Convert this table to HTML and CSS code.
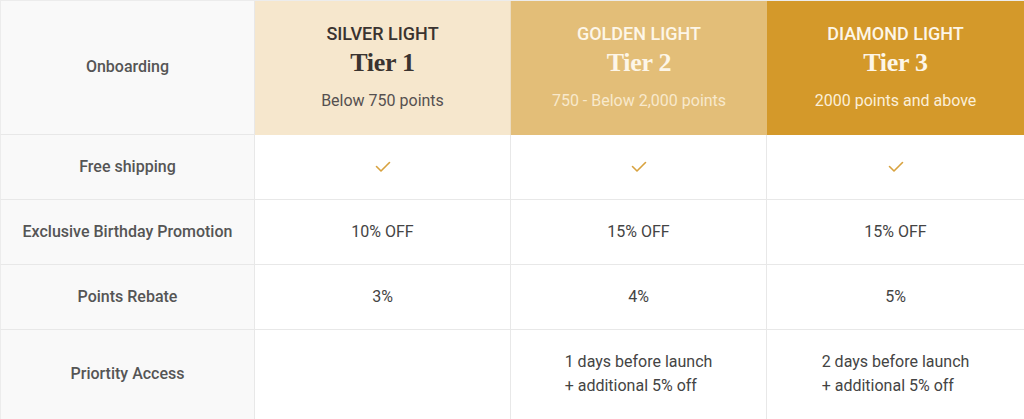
FILE: index.html
```html
<!DOCTYPE html>
<html>
<head>
<meta charset="utf-8">
<link rel="stylesheet" href="styles.css">
</head>
<body>
<div class="table">
  <div class="cell label head-label">Onboarding</div>
  <div class="cell tier tier1">
    <div class="tier-name">SILVER LIGHT</div>
    <div class="tier-title">Tier 1</div>
    <div class="tier-range">Below 750 points</div>
  </div>
  <div class="cell tier tier2">
    <div class="tier-name">GOLDEN LIGHT</div>
    <div class="tier-title">Tier 2</div>
    <div class="tier-range">750 - Below 2,000 points</div>
  </div>
  <div class="cell tier tier3">
    <div class="tier-name">DIAMOND LIGHT</div>
    <div class="tier-title">Tier 3</div>
    <div class="tier-range">2000 points and above</div>
  </div>

  <div class="cell label">Free shipping</div>
  <div class="cell value"><svg class="check" viewBox="0 0 16 12"><path d="M1.5 5.5 L6 10 L14.5 1.5"/></svg></div>
  <div class="cell value"><svg class="check" viewBox="0 0 16 12"><path d="M1.5 5.5 L6 10 L14.5 1.5"/></svg></div>
  <div class="cell value last"><svg class="check" viewBox="0 0 16 12"><path d="M1.5 5.5 L6 10 L14.5 1.5"/></svg></div>

  <div class="cell label">Exclusive Birthday Promotion</div>
  <div class="cell value">10% OFF</div>
  <div class="cell value">15% OFF</div>
  <div class="cell value last">15% OFF</div>

  <div class="cell label">Points Rebate</div>
  <div class="cell value">3%</div>
  <div class="cell value">4%</div>
  <div class="cell value last">5%</div>

  <div class="cell label tall">Priortity Access</div>
  <div class="cell value tall"></div>
  <div class="cell value tall"><div class="multi">1 days before launch<br>+ additional 5% off</div></div>
  <div class="cell value tall last"><div class="multi">2 days before launch<br>+ additional 5% off</div></div>
</div>
</body>
</html>
```
FILE: styles.css
```css
html, body {
  margin: 0;
  padding: 0;
  background: #ffffff;
}
body {
  font-family: Roboto, "Liberation Sans", sans-serif;
}
.table {
  display: grid;
  grid-template-columns: 255px 256px 256px 257px;
  grid-template-rows: 134px 65px 65px 65px 89px;
  border-top: 1px solid #ececec;
  border-bottom: 1px solid #e6e6e6;
  width: 1024px;
  box-sizing: border-box;
}
.cell {
  display: flex;
  flex-direction: column;
  align-items: center;
  justify-content: center;
  border-right: 1px solid #e8e8e8;
  border-bottom: 1px solid #e8e8e8;
  box-sizing: border-box;
  text-align: center;
  padding-bottom: 2px;
}
.cell.last, .tier3 {
  border-right: none;
}
.label {
  background: #f9f9f9;
  color: #555555;
  font-size: 16px;
  font-weight: 500;
  border-left: 1px solid #ececec;
}
.value {
  background: #ffffff;
  color: #444444;
  font-size: 16px;
  font-weight: 400;
}
.tall {
  border-bottom: none;
}
.tier {
  border-bottom: none;
  padding-bottom: 3px;
}
.tier1 {
  background: #f6e7cd;
  color: #3a3330;
  border-right-color: #ecdcc0;
}
.tier2 {
  background: #e3be78;
  color: #fdf6e8;
  border-right: none;
}
.tier3 {
  background: #d4992a;
  color: #fdf6e8;
}
.tier-name {
  font-size: 18px;
  font-weight: 500;
  line-height: 22px;
}
.tier-title {
  font-family: "Liberation Serif", "DejaVu Serif", serif;
  font-weight: 700;
  font-size: 26px;
  line-height: 30px;
  margin-top: 3px;
  letter-spacing: -0.3px;
}
.tier-range {
  font-size: 16px;
  line-height: 20px;
  margin-top: 13px;
}
.tier1 .tier-range {
  color: #555050;
}
.tier2 .tier-range {
  color: #f8e9cc;
}
.tier3 .tier-range {
  color: #fbefd8;
}
.check {
  width: 16px;
  height: 12px;
  fill: none;
  stroke: #d8a23f;
  stroke-width: 1.6;
  stroke-linecap: round;
  stroke-linejoin: round;
  margin-top: 2px;
}
.multi {
  text-align: left;
  line-height: 24px;
}
```
